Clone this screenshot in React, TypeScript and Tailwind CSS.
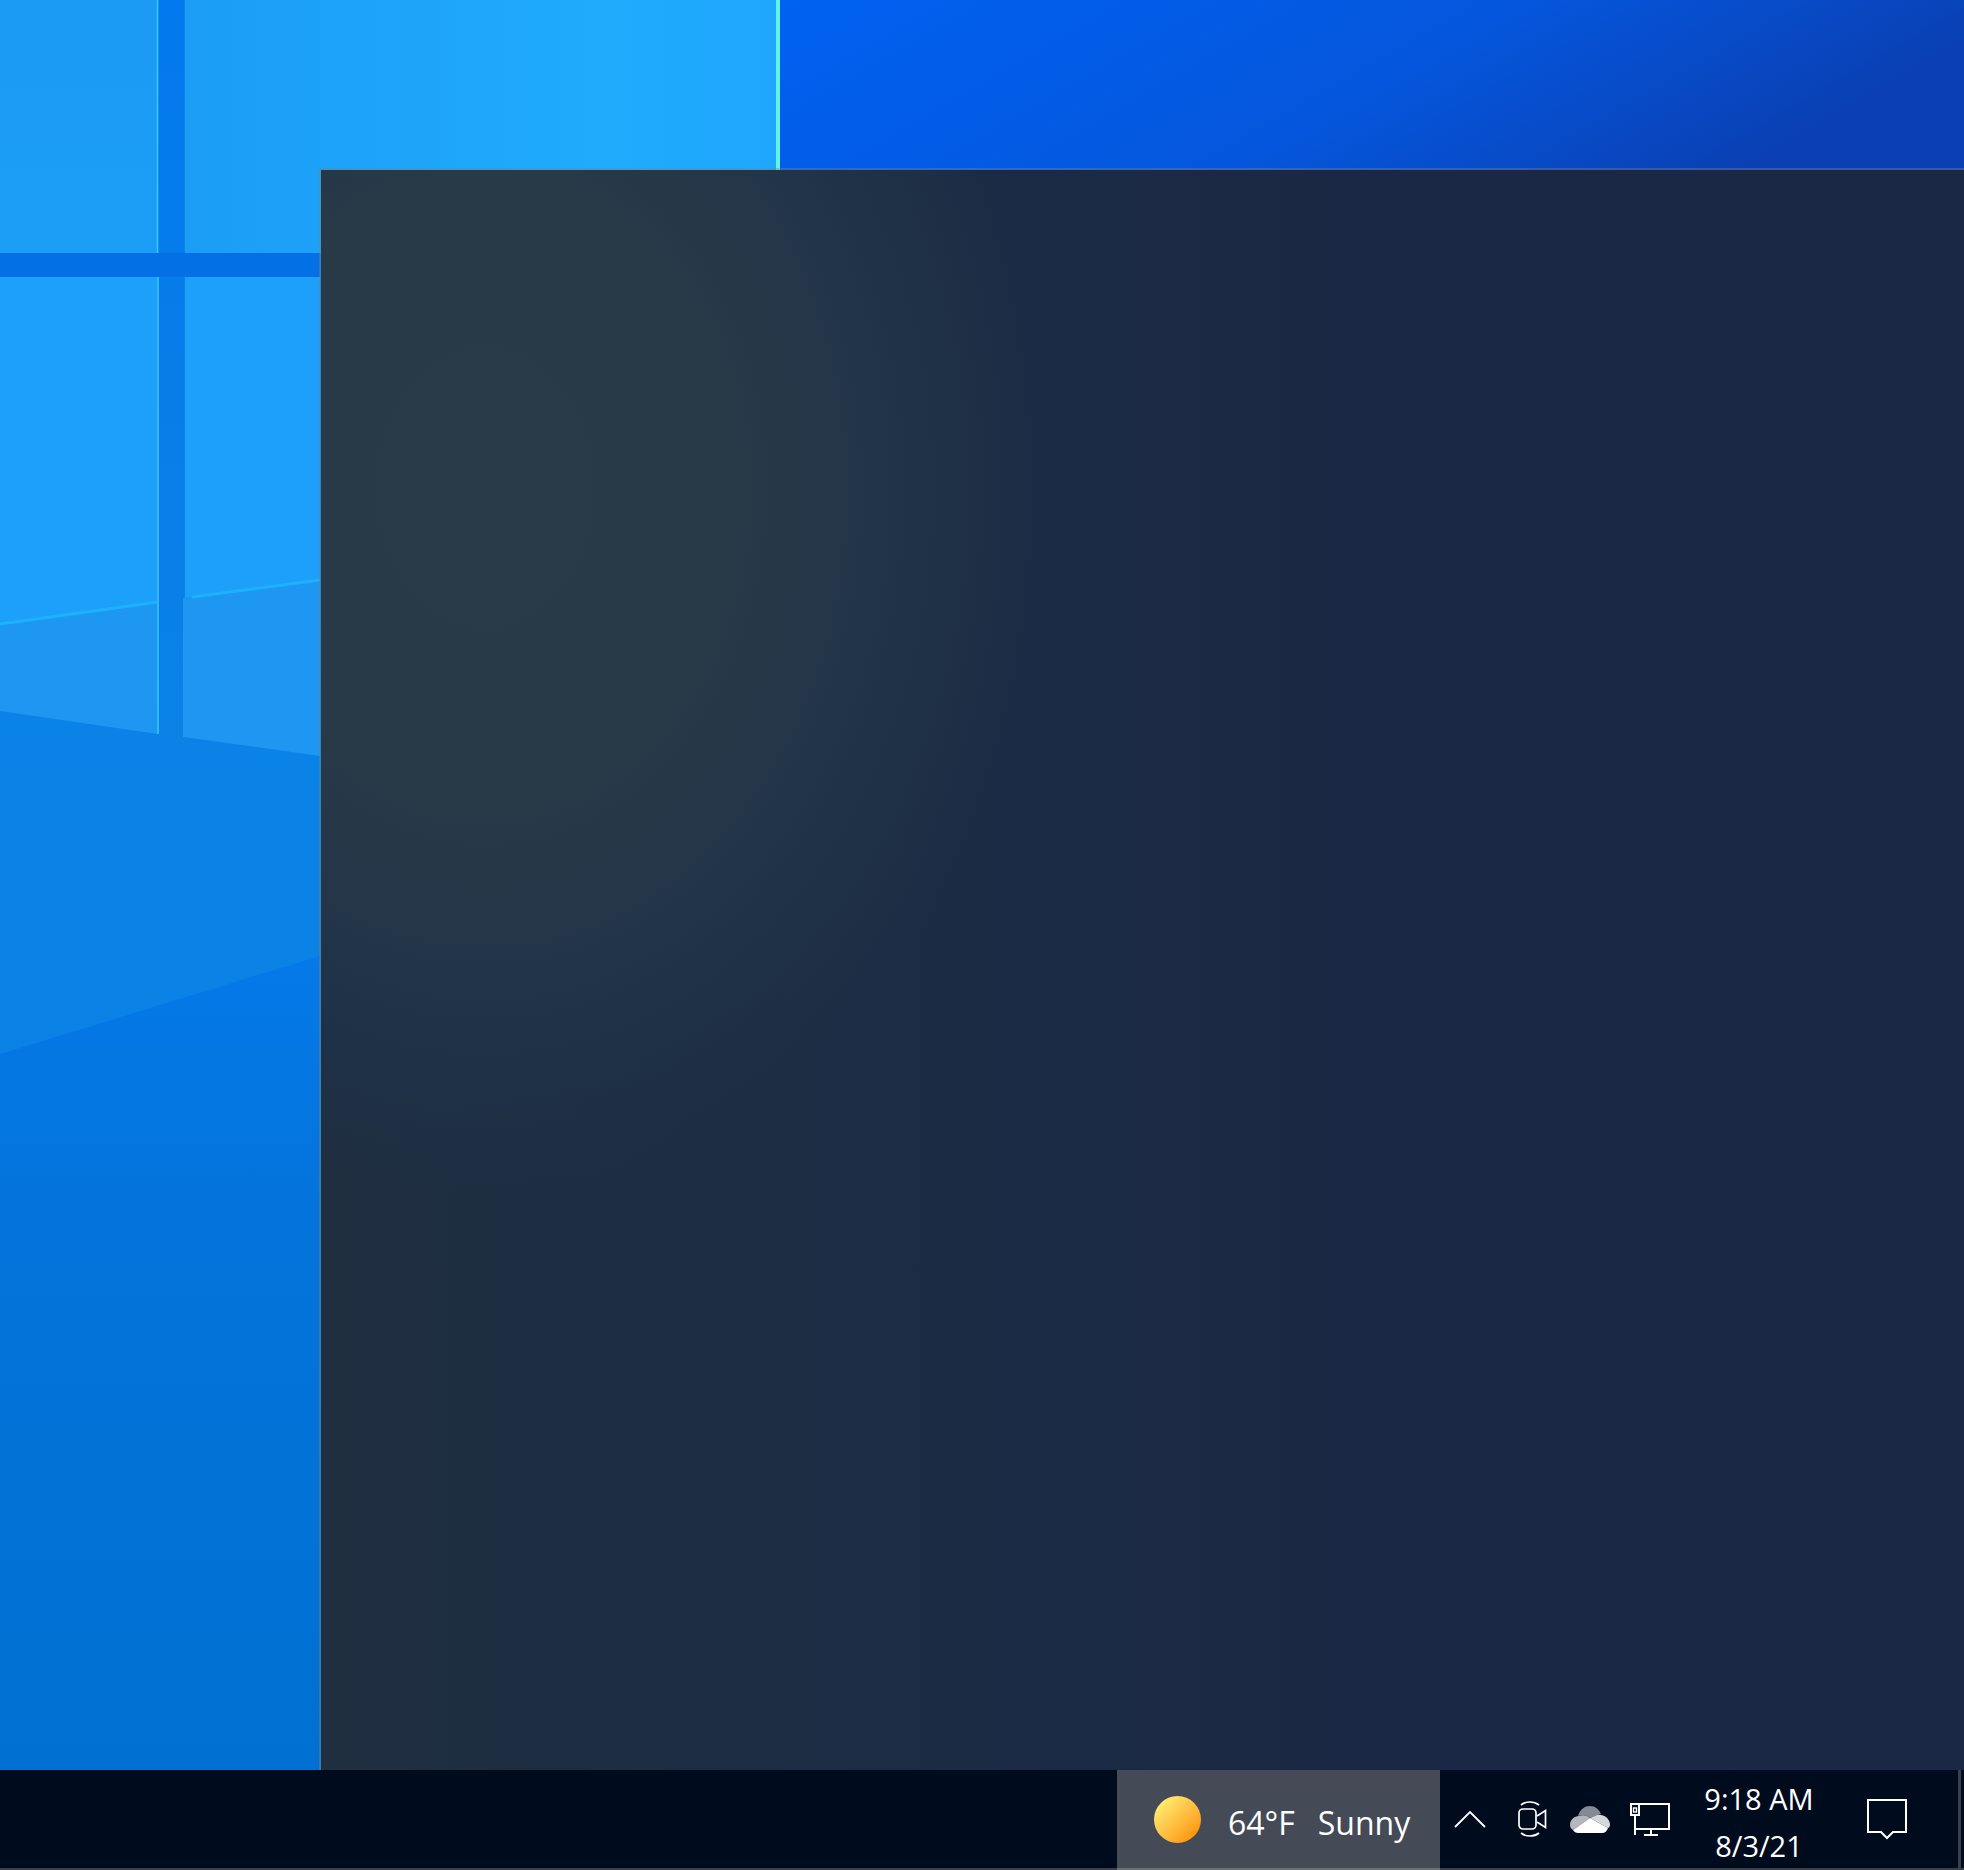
import React from 'react';

const Wallpaper: React.FC = () => (
  <svg className="absolute inset-0" width="1964" height="1770" viewBox="0 0 1964 1770">
    <defs>
      <linearGradient id="base" x1="0" y1="0" x2="0" y2="1">
        <stop offset="0" stopColor="#0a84ea" />
        <stop offset="0.55" stopColor="#0a82e6" />
        <stop offset="1" stopColor="#047ce2" />
      </linearGradient>
      <linearGradient id="floor" x1="0" y1="0" x2="0" y2="1">
        <stop offset="0" stopColor="#0479e8" />
        <stop offset="0.3" stopColor="#0474dc" />
        <stop offset="1" stopColor="#0070d2" />
      </linearGradient>
      <linearGradient id="sky" x1="0" y1="0" x2="1" y2="0.25">
        <stop offset="0" stopColor="#0062f2" />
        <stop offset="0.6" stopColor="#0556dc" />
        <stop offset="1" stopColor="#0a40b4" />
      </linearGradient>
      <linearGradient id="bar" x1="0" y1="0" x2="0" y2="1">
        <stop offset="0" stopColor="#0478ee" />
        <stop offset="1" stopColor="#0a82e6" />
      </linearGradient>
      <linearGradient id="paneLeft" x1="0" y1="0" x2="0" y2="1">
        <stop offset="0" stopColor="#1b9bf4" />
        <stop offset="1" stopColor="#1c9df6" />
      </linearGradient>
      <linearGradient id="paneTop" x1="0" y1="0" x2="1" y2="0">
        <stop offset="0" stopColor="#1b9df6" />
        <stop offset="0.7" stopColor="#20abfd" />
        <stop offset="1" stopColor="#1fa7fd" />
      </linearGradient>
    </defs>
    <rect width="1964" height="1770" fill="url(#base)" />
    <path d="M0 1054 L320 956 V1770 H0 Z" fill="url(#floor)" />
    <rect x="779" width="1185" height="170" fill="url(#sky)" />
    <rect x="159" width="25" height="740" fill="url(#bar)" />
    <rect x="0" y="253" width="320" height="24" fill="#0470e6" />

    {/* upper panes */}
    <rect width="158" height="253" fill="url(#paneLeft)" />
    <rect x="185" width="594" height="253" fill="url(#paneTop)" />

    {/* lower panes and their reflection */}
    <path d="M0 277 H159 V602 L0 624 Z" fill="#1ca0f9" />
    <path d="M0 624 L158 602 V734 L0 711 Z" fill="#1e97f2" />
    <path d="M185 277 H320 V580 L185 598 Z" fill="#1ca0f9" />
    <path d="M183 598 L320 580 V756 L183 737 Z" fill="#1e97f2" />
    <path d="M0 624 L158 602" stroke="#1cb2ff" strokeWidth="3" />
    <path d="M192 597 L320 580" stroke="#1cb2ff" strokeWidth="3" />

    {/* lit glass edges */}
    <path d="M157.5 0 V253" stroke="#35c8f2" strokeWidth="1.5" />
    <path d="M158 277 V734" stroke="#30b8f2" strokeWidth="2" />
    <path d="M778 0 V170" stroke="#62f2e6" strokeWidth="4" />
  </svg>
);

const MeetIcon: React.FC = () => (
  <svg width="29" height="36" viewBox="0 0 29 36" fill="none" stroke="#fff" strokeWidth="1.7">
    <path d="M3 4 C8 0 16 0 21 4" />
    <rect x="1" y="8" width="17" height="20" rx="4" />
    <path d="M19 15 L27.5 9.5 V26.5 L19 21" />
    <path d="M3 32 C8 36 16 36 21 32" />
  </svg>
);

const CloudIcon: React.FC = () => (
  <svg width="40" height="27" viewBox="0 0 40 27">
    <path d="M8 10 C10 3 15 0 20 0 C25 0 29 3 31 8 L27 9 L20 12 L17 10 C14 9 11 9 8 10 Z" fill="#858a94" />
    <path d="M0 19 C0 14 4 10 9 10 C12 9 14 9 17 10 L20 12 L3 24 C1 23 0 21 0 19 Z" fill="#b3b6bc" />
    <path d="M20 12 L27 9 C33 8 40 12 40 19 C40 20 39 22 38 22 Z" fill="#d6d8db" />
    <path d="M3 24 L20 12 L38 22 C37 25 35 27 32 27 H8 C6 27 4 26 3 24 Z" fill="#fff" />
  </svg>
);

const NetworkIcon: React.FC = () => (
  <svg width="40" height="33" viewBox="0 0 40 33" fill="none" stroke="#fff" strokeWidth="2">
    <path d="M9 1 H39 V26 H5" />
    <rect x="1" y="1" width="8" height="11" />
    <rect x="3.5" y="5" width="3" height="4" strokeWidth="1.4" />
    <path d="M5 12 V32" />
    <path d="M21 26 V32 M14 32 H28" />
  </svg>
);

const ActionCenterIcon: React.FC = () => (
  <svg width="40" height="41" viewBox="0 0 40 41" fill="none" stroke="#fff" strokeWidth="2">
    <path d="M1 1 H39 V33 H26 L20 39 L14 33 H1 Z" />
  </svg>
);

export default function App() {
  return (
    <div className="flex h-[1870px] w-[1964px] flex-col overflow-hidden font-['Open_Sans','Noto_Sans',sans-serif] text-white">
      <div className="relative h-[1770px] shrink-0 overflow-hidden">
        <Wallpaper />
        <div className="relative ml-[319px] mt-[168px] h-[1602px] border-l-2 border-t-2 border-[#80808066] bg-clip-padding bg-[radial-gradient(ellipse_34%_44%_at_10%_20%,#293b48_0%,#283a48_45%,#1f3147_82%,transparent_100%),linear-gradient(90deg,#1f2f40_0%,#1c2c44_32%,#1a2745_70%,#1b2845_100%)]" />
      </div>

      <div className="flex h-[100px] items-stretch border-b-2 border-[#3a3f4a] bg-[#010b1e]">
        <div className="-mb-[2px] ml-[1117px] flex w-[323px] items-center border-b-2 border-[#6a6f78] bg-[#444a56] pl-[37px]">
          <div className="mt-[1px] h-[47px] w-[47px] rounded-full bg-gradient-to-br from-[#ffe96b] from-15% to-[#ff9800] to-85%" />
          <span className="ml-[27px] mt-[8px] whitespace-nowrap text-[32px] leading-none">64°F</span>
          <span className="ml-[23px] mt-[8px] whitespace-nowrap text-[32px] leading-none">Sunny</span>
        </div>

        <div className="ml-[14px] flex items-center">
          <svg width="32" height="18" viewBox="0 0 32 18" fill="none" stroke="#fff" strokeWidth="1.8">
            <path d="M1 17 L16 2 L31 17" />
          </svg>
        </div>
        <div className="ml-[32px] flex items-center">
          <MeetIcon />
        </div>
        <div className="ml-[23px] flex items-center">
          <CloudIcon />
        </div>
        <div className="ml-[20px] flex items-center">
          <NetworkIcon />
        </div>

        <div className="ml-[31px] flex w-[116px] flex-col items-center pt-[5px] text-[29px] leading-[47px]">
          <span className="whitespace-nowrap">9:18 AM</span>
          <span className="whitespace-nowrap">8/3/21</span>
        </div>

        <div className="ml-[50px] flex items-center">
          <ActionCenterIcon />
        </div>
        <div className="ml-[51px] w-[3px] bg-[#3a3f4a]" />
      </div>
    </div>
  );
}
